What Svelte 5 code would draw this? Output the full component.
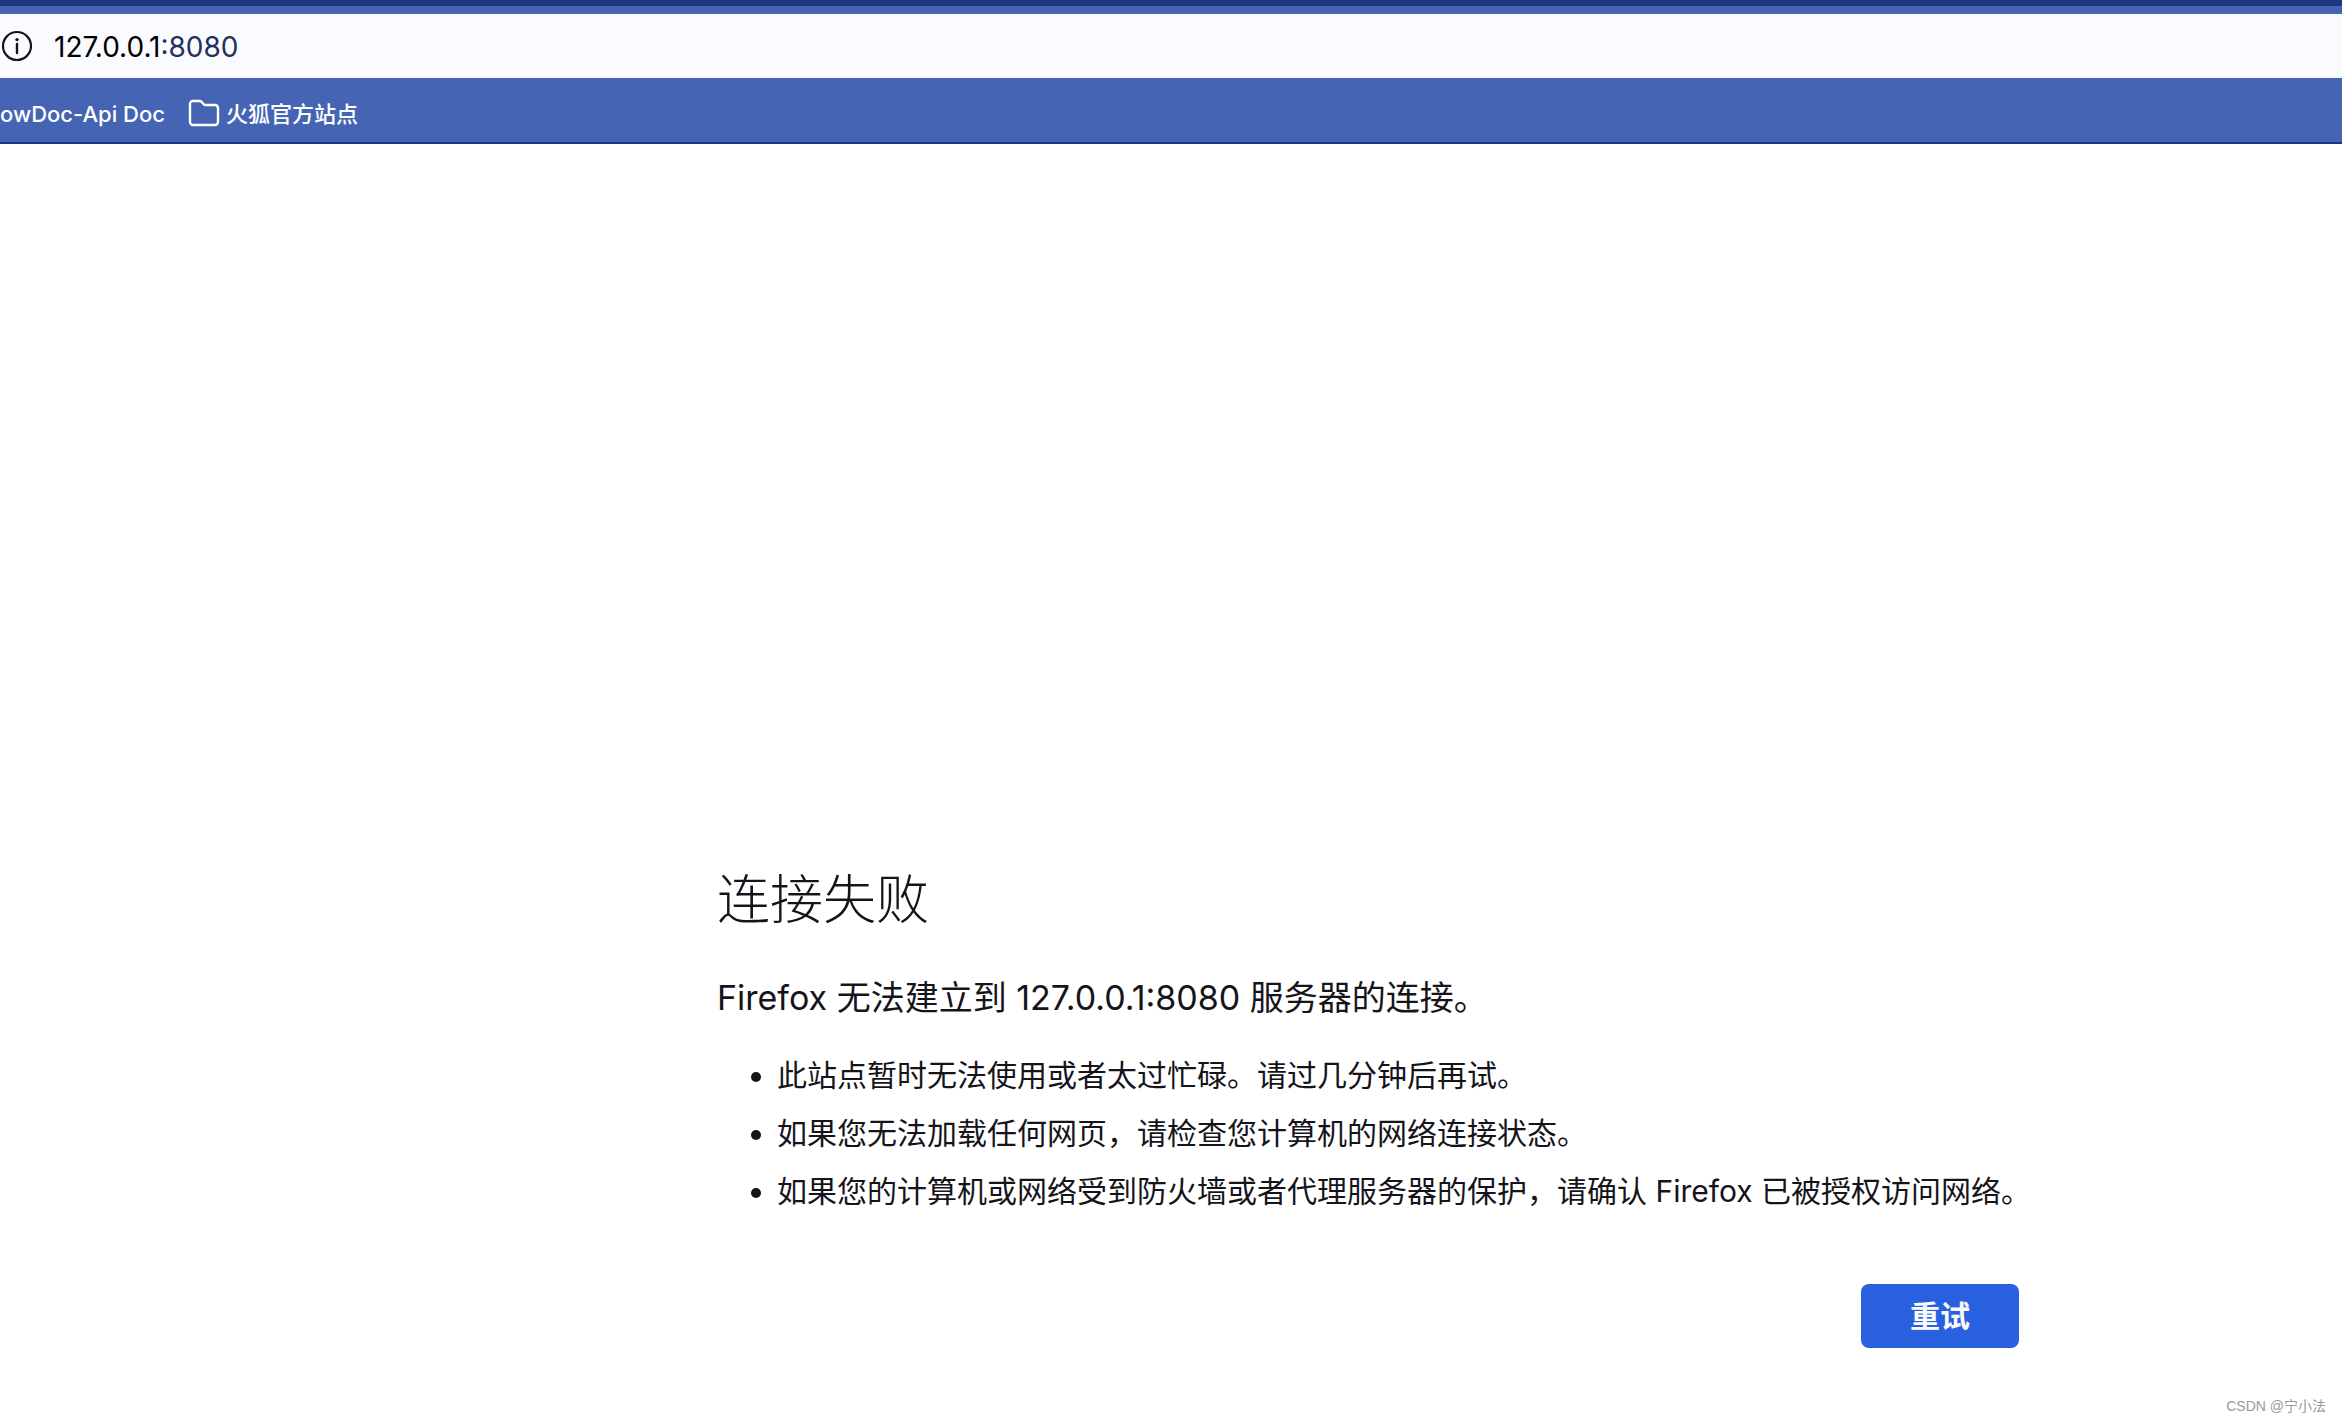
<script lang="ts">
  const host = '127.0.0.1';
  const port = '8080';

  const reasons = [
    '此站点暂时无法使用或者太过忙碌。请过几分钟后再试。',
    '如果您无法加载任何网页，请检查您计算机的网络连接状态。',
    '如果您的计算机或网络受到防火墙或者代理服务器的保护，请确认 Firefox 已被授权访问网络。'
  ];

  const retry = () => location.reload();
</script>

<div class="window">
  <header>
    <div class="tabs"></div>
    <div class="address">
      <svg class="info" viewBox="0 0 32 32" aria-hidden="true">
        <circle cx="16" cy="16" r="14" fill="none" stroke="currentColor" stroke-width="2.2" />
        <circle cx="16" cy="9.6" r="1.7" fill="currentColor" />
        <path d="M16 14v9" stroke="currentColor" stroke-width="2.4" stroke-linecap="round" />
      </svg>
      <span class="url">{host}<span class="port">:{port}</span></span>
    </div>
    <nav class="bookmarks">
      <a href="#doc">owDoc-Api Doc</a>
      <a href="#firefox">
        <svg class="folder" viewBox="0 0 32 28" aria-hidden="true">
          <path
            d="M2 5a3 3 0 0 1 3-3h6.500a3 3 0 0 1 2.200 1l2 2.200a2.500 2.500 0 0 0 1.800.8H27a3 3 0 0 1 3 3v14a3 3 0 0 1-3 3H5a3 3 0 0 1-3-3z"
            fill="none"
            stroke="currentColor"
            stroke-width="2.4"
          />
        </svg>
        火狐官方站点
      </a>
    </nav>
  </header>

  <main>
    <div class="content">
      <h1>连接失败</h1>
      <p>Firefox 无法建立到 {host}:{port} 服务器的连接。</p>
      <ul>
        {#each reasons as reason}
          <li>{reason}</li>
        {/each}
      </ul>
      <div class="actions">
        <button type="button" onclick={retry}>重试</button>
      </div>
    </div>
  </main>

  <div class="watermark">CSDN @宁小法</div>
</div>

<style>
  :global(body) {
    margin: 0;
    background: #fff;
    color: #15141a;
    font-family: Inter, 'Noto Sans CJK SC', sans-serif;
  }

  .window {
    position: relative;
    display: flex;
    flex-direction: column;
    min-height: 100vh;
  }

  .tabs {
    height: 8px;
    border-top: 6px solid #1e357b;
    background: #4565b4;
  }

  .address {
    display: flex;
    align-items: center;
    gap: 21px;
    height: 64px;
    background: #fafbff;
    color: #15141a;
  }

  .info {
    width: 32px;
    height: 32px;
    margin-left: 1px;
  }

  .url {
    padding-top: 2px;
    color: #000;
    font-size: 28px;
    line-height: 36px;
  }

  .port {
    color: #24305e;
  }

  .bookmarks {
    display: flex;
    align-items: center;
    gap: 23px;
    height: 56px;
    padding-top: 8px;
    background: #4565b4;
    border-bottom: 2px solid #1e357b;
  }

  .bookmarks a {
    display: flex;
    align-items: center;
    gap: 6px;
    color: #fff;
    font-size: 22px;
    font-weight: 500;
    line-height: 32px;
    text-decoration: none;
    white-space: nowrap;
  }

  .folder {
    width: 32px;
    height: 28px;
    margin-bottom: 2px;
  }

  main {
    flex: 1;
    display: flex;
    align-items: flex-end;
    justify-content: flex-end;
    padding: 0 323px 76px 24px;
  }

  .content {
    width: 100%;
    max-width: 1302px;
  }

  h1 {
    margin: 0 0 40px;
    font-size: 53px;
    font-weight: 200;
    line-height: 64px;
  }

  p {
    margin: 0 0 28px;
    font-size: 34px;
    line-height: 52px;
  }

  /* the longest reason runs a little past the button edge */
  ul {
    margin: 0 -24px 0 0;
    padding-left: 60px;
    font-size: 30px;
    line-height: 46px;
  }

  li {
    margin-bottom: 12px;
  }

  .actions {
    display: flex;
    justify-content: flex-end;
    margin-top: 70px;
  }

  button {
    min-width: 158px;
    height: 64px;
    padding: 0 24px 4px;
    border: 0;
    border-radius: 8px;
    background: #2860e0;
    color: #fbfbfe;
    font-family: inherit;
    font-size: 30px;
    font-weight: 700;
    cursor: pointer;
  }

  .watermark {
    position: absolute;
    right: 16px;
    bottom: 8px;
    color: #999;
    font-family: 'Liberation Sans', 'Noto Sans CJK SC', sans-serif;
    font-size: 14px;
    line-height: 20px;
  }
</style>
